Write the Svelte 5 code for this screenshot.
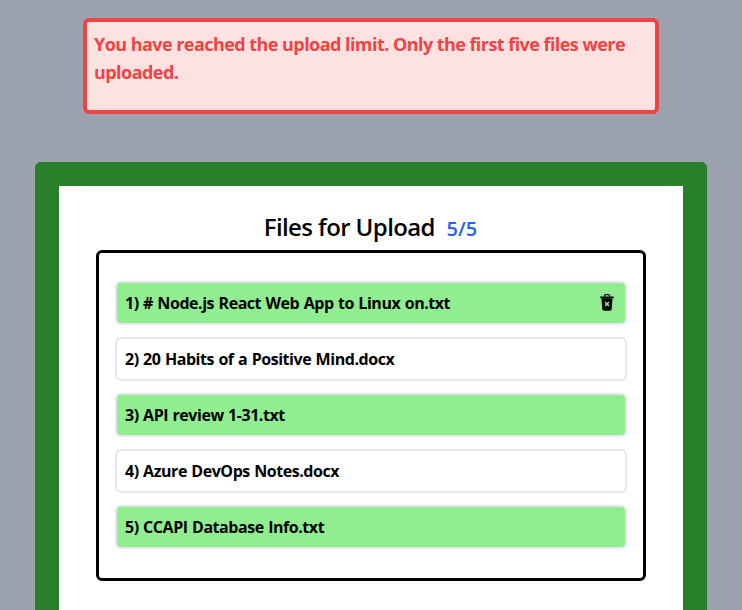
<script>
  const files = [
    '# Node.js React Web App to Linux on.txt',
    '20 Habits of a Positive Mind.docx',
    'API review 1-31.txt',
    'Azure DevOps Notes.docx',
    'CCAPI Database Info.txt'
  ];
</script>

<main class="page">
  <div class="alert">You have reached the upload limit. Only the first five files were uploaded.</div>

  <section class="card">
    <h2 class="title">Files for Upload <span class="count">5/5</span></h2>
    <ul class="list">
      {#each files as file, i}
        <li class="row" class:even={i % 2 === 0}>
          <span>{i + 1}) {file}</span>
          {#if i === 0}
            <svg class="trash" viewBox="0 0 14 17" width="14" height="17" aria-hidden="true">
              <path fill="none" stroke="#000" stroke-width="1.2" d="M4.4 3V1.7C4.4 1 4.8.6 5.5.6h3c.7 0 1.1.4 1.1 1.1V3" />
              <path d="M.3 2.5h13.4v1.8H.3z" />
              <path fill-rule="evenodd" d="M1.4 4.3h11.2l-.9 10.8c-.1 1-.8 1.6-1.7 1.6H4c-.9 0-1.6-.6-1.7-1.6zM5.5 7.4 4.5 8.4l1.5 1.6-1.5 1.6 1 1L7 11l1.5 1.6 1-1L8 10l1.5-1.6-1-1L7 9z" />
            </svg>
          {/if}
        </li>
      {/each}
    </ul>
  </section>
</main>

<style>
  :global(body) {
    margin: 0;
    background: #9ca3af;
    font-family: "Open Sans", "Noto Sans", sans-serif;
  }
  .page {
    height: 610px;
    overflow: hidden;
    padding-top: 18px;
    box-sizing: border-box;
  }
  .alert {
    width: 576px;
    height: 96px;
    box-sizing: border-box;
    margin-left: 83px;
    padding: 8px 7px;
    border: 4px solid #ef4444;
    border-radius: 6px;
    background: #fee2e2;
    color: #ef4444;
    font-size: 18px;
    font-weight: 700;
    line-height: 28px;
    letter-spacing: -0.55px;
  }
  .card {
    width: 672px;
    box-sizing: border-box;
    margin: 48px 0 0 35px;
    padding: 24px 37px 40px;
    border: 24px solid #2a802a;
    border-bottom: 0;
    border-radius: 6px 6px 0 0;
    background: #fff;
    background-clip: padding-box;
  }
  .title {
    margin: 0;
    height: 40px;
    color: #000;
    font-size: 24px;
    font-weight: 600;
    line-height: 34px;
    text-align: center;
    letter-spacing: -0.6px;
  }
  .count {
    margin-left: 6px;
    margin-right: 1px;
    color: #2563eb;
    font-size: 20px;
    letter-spacing: 0;
  }
  .list {
    list-style: none;
    margin: 0;
    padding: 28px 16px 29px;
    border: 3px solid #000;
    border-radius: 6px;
    display: flex;
    flex-direction: column;
    gap: 12px;
  }
  .row {
    height: 44px;
    box-sizing: border-box;
    display: flex;
    align-items: center;
    justify-content: space-between;
    padding: 0 11px 0 8px;
    border: 2px solid #e5e7eb;
    border-radius: 6px;
    color: #000;
    font-size: 16px;
    font-weight: 700;
    letter-spacing: -0.45px;
    word-spacing: 0.7px;
  }
  .even {
    background: #90ee90;
  }
  .trash {
    display: block;
    margin-bottom: 2px;
  }
</style>
